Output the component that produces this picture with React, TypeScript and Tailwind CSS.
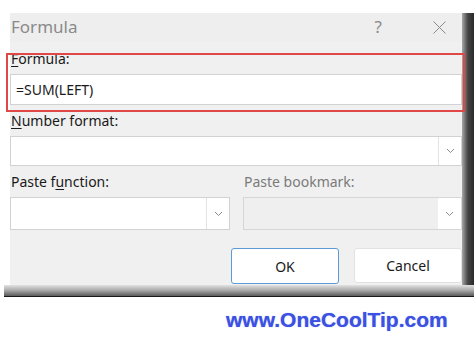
import React from 'react';

const Chevron: React.FC = () => (
  <svg width="9" height="6" viewBox="0 0 9 6" fill="none">
    <path d="M1 1l3.5 3.5L8 1" stroke="#8a8a8a" strokeWidth="1" />
  </svg>
);

const DropButton: React.FC<{ className?: string }> = ({ className = '' }) => (
  <div className={`w-[23px] h-full bg-white border-l border-[#e3e3e3] flex items-center justify-center ${className}`}>
    <Chevron />
  </div>
);

const App: React.FC = () => {
  return (
    <div className="relative w-[474px] h-[348px] bg-white overflow-hidden font-['Noto_Sans',sans-serif] text-[14px] text-[#1a1a1a]">
      <div className="flex pt-[13px]">
        {/* Dialog */}
        <div className="ml-[10px] w-[452px] bg-[#f0f0f0] pb-[1px]">
          {/* Title bar */}
          <div className="h-[28px] flex items-center bg-[#eeeeee]">
            <span className="pl-[1px] text-[17px] text-[#8a8a8a]">Formula</span>
            <span className="ml-auto mr-[51px] text-[17px] text-[#8a8a8a]">?</span>
            <svg width="13" height="13" viewBox="0 0 13 13" className="mr-[16px]">
              <path d="M0.5 0.5l12 12M12.5 0.5l-12 12" stroke="#8a8a8a" strokeWidth="1" />
            </svg>
          </div>

          <div className="pt-[8px]">
            <div className="h-[20px] leading-[20px] pl-[1px]">
              <span className="underline underline-offset-2">F</span>ormula:
            </div>
            <div className="mt-[5px] h-[31px] bg-white border border-[#d2d2d2] flex items-center pl-[5px]">
              =SUM(LEFT)
            </div>

            <div className="mt-[6px] h-[20px] leading-[20px] pl-[1px]">
              <span className="underline underline-offset-2">N</span>umber format:
            </div>
            <div className="mt-[5px] h-[30px] bg-white border border-[#d2d2d2] flex justify-end">
              <DropButton />
            </div>

            <div className="mt-[6px] flex gap-[13px]">
              <div className="w-[220px]">
                <div className="h-[20px] leading-[20px] pl-[1px]">
                  Paste f<span className="underline underline-offset-2">u</span>nction:
                </div>
                <div className="mt-[5px] h-[33px] bg-white border border-[#d2d2d2] flex justify-end">
                  <DropButton />
                </div>
              </div>
              <div className="flex-1">
                <div className="h-[20px] leading-[20px] pl-[1px] text-[#7a7a7a]">Paste bookmark:</div>
                <div className="mt-[5px] h-[33px] bg-[#efefef] border border-[#d6d6d6] flex justify-end">
                  <DropButton className="border-l-0" />
                </div>
              </div>
            </div>

            <div className="mt-[18px] flex justify-end gap-[15px]">
              <button className="w-[108px] h-[36px] bg-white border border-[#5b9bd8] rounded-[3px] text-[14px] text-[#1a1a1a]">
                OK
              </button>
              <button className="w-[108px] h-[35px] bg-white border border-[#e2e2e2] rounded-[3px] text-[14px] text-[#1a1a1a]">
                Cancel
              </button>
            </div>
          </div>
        </div>
        {/* Right shadow */}
        <div className="w-[12px] bg-gradient-to-r from-[#a8a8a8] via-[#444444] to-[#2a2a2a]" />
      </div>
      {/* Bottom shadow */}
      <div className="ml-[4px] w-[470px] h-[12px] bg-gradient-to-b from-[#e2e2e2] via-[#a8a8a8] to-[#5a5a5a] border-b border-[#1a1a1a]" />

      <div className="mt-[11px] pl-[226px] font-['Liberation_Sans',Arial,sans-serif] font-bold text-[21px] leading-[24px] text-[#3c50e2] [text-shadow:0_0_1px_#7c8cf0]">
        www.OneCoolTip.com
      </div>

      {/* Red highlight annotation */}
      <div className="absolute left-[6px] top-[53px] w-[459px] h-[59px] border-2 border-[#e04848] pointer-events-none" />
    </div>
  );
};

export default App;
